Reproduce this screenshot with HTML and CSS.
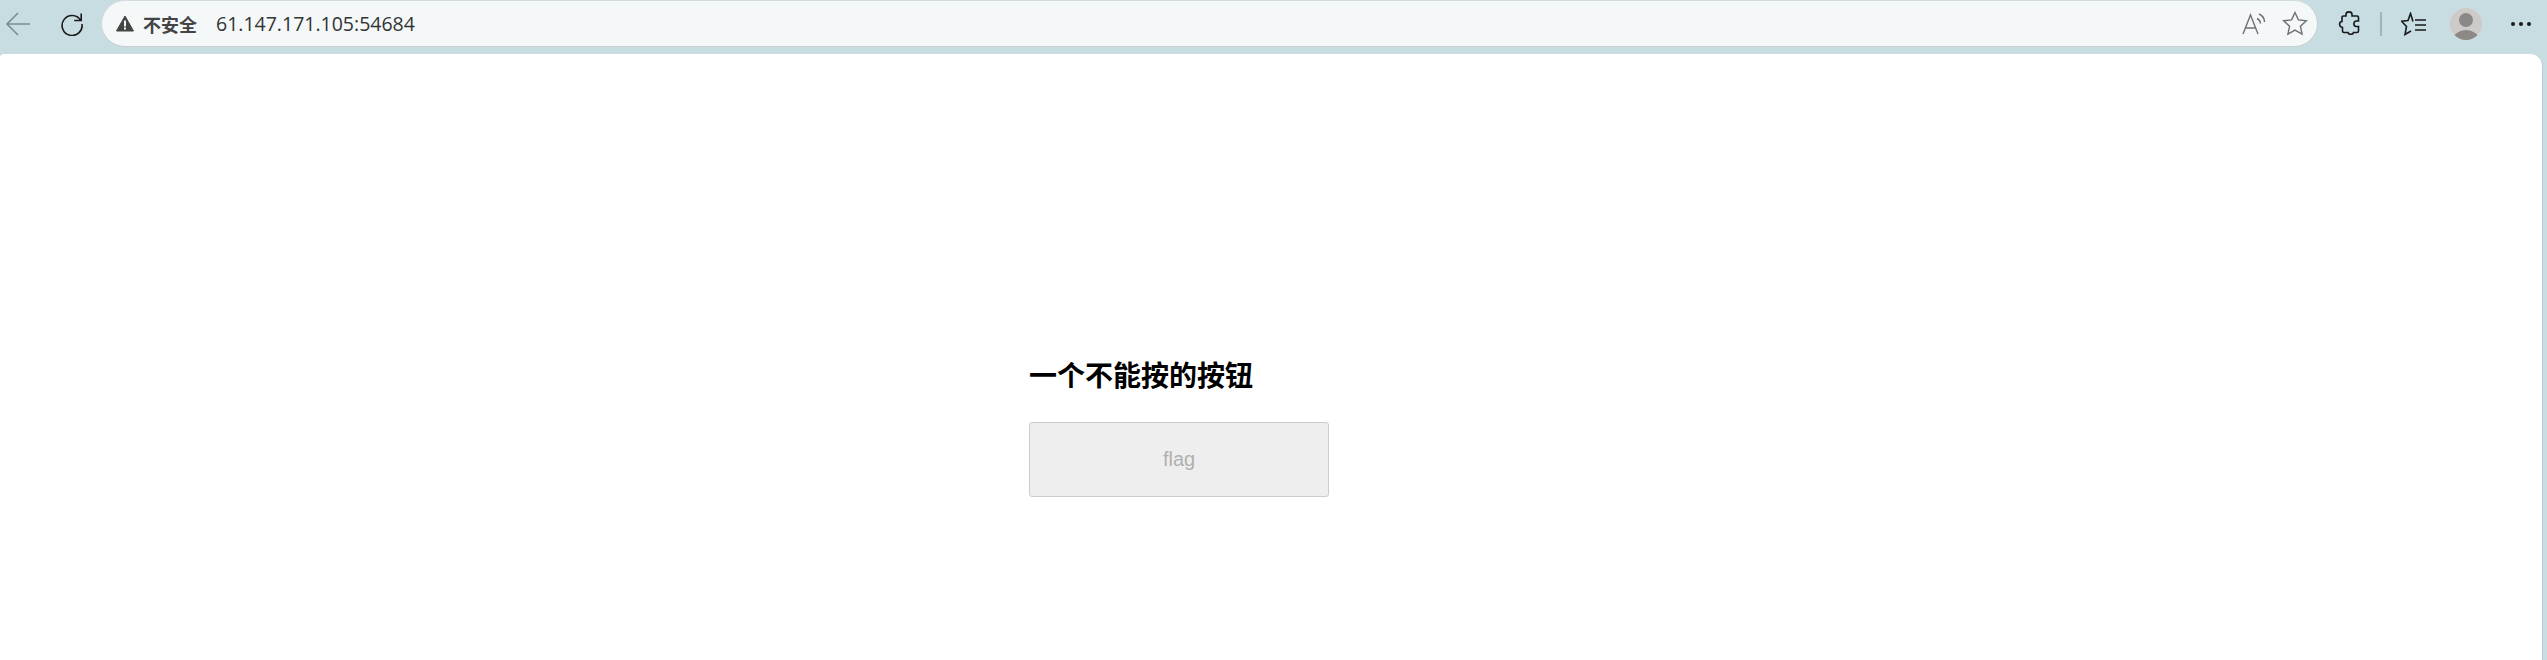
FILE: index.html
```html
<!DOCTYPE html>
<html lang="zh-CN">
<head>
    <meta charset="UTF-8">
    <title>一个不能按的按钮</title>
    <link rel="stylesheet" href="styles.css">
</head>
<body>
    <div class="toolbar">
        <svg class="icon back" width="26" height="26" viewBox="0 0 26 26"><path d="M25 13H2M13 2 2 13l11 11"/></svg>
        <svg class="icon reload" width="24" height="24" viewBox="0 0 24 24"><path d="M20.6 8.2A10 10 0 1 0 22 12M21.2 1.5v7h-7"/></svg>
        <div class="address">
            <svg class="warn" width="18" height="17" viewBox="0 0 18 17"><path d="M9 1 .5 16h17z" fill="#444" stroke="#444" stroke-linejoin="round"/><path d="M8 5.500h2v6H8zM8 12.500h2v2H8z" fill="#f4f8f9"/></svg>
            <span class="secure">不安全</span>
            <span class="url">61.147.171.105:54684</span>
            <svg class="read" width="24" height="24" viewBox="0 0 24 24"><path d="M1 22 8.500 3 16 22M3.500 16h10M15 6.500a6 6 0 0 1 3.500 5M17 2a9 9 0 0 1 5.500 8"/></svg>
            <svg class="star" width="26" height="25" viewBox="0 0 26 25"><path d="M13 1.500l3.400 7.400 8 .9-6 5.400 1.700 7.900-7.100-4-7.100 4 1.700-7.900-6-5.400 8-.9z"/></svg>
        </div>
        <svg class="icon puzzle" width="22" height="24" viewBox="0 0 22 24"><path d="M8 3.500C8 0 14 0 14 3.500V5h5a1.500 1.500 0 0 1 1.500 1.500V10h-2c-3.500 0-3.500 5.500 0 5.500h2V20a1.500 1.500 0 0 1-1.500 1.500h-3.500c-.5 2.500-5 2.500-5.500 0H6A1.500 1.500 0 0 1 4.500 20v-3.500C1 16 .5 11 4 10.500V6.500A1.500 1.500 0 0 1 5.500 5H8z"/></svg>
        <div class="divider"></div>
        <svg class="icon favs" width="26" height="24" viewBox="0 0 26 24"><path d="M12 9.500 9.500 1.500 7 8.500l-6.500.7 5 5.300-1.500 8 6-3.500M14 8h11M14 13h11M14 18h11"/></svg>
        <div class="avatar">
            <svg width="32" height="32" viewBox="0 0 32 32"><circle cx="16" cy="12" r="7" fill="#8b8885"/><path d="M3 32a13 10 0 0 1 26 0z" fill="#8b8885"/></svg>
        </div>
        <div class="more"><i></i><i></i><i></i></div>
    </div>

    <div class="page">
        <div class="panel">
            <h3>一个不能按的按钮</h3>
            <button class="flag-btn" disabled>flag</button>
        </div>
    </div>
</body>
</html>
```

FILE: styles.css
```css
html, body {
    margin: 0;
    height: 100%;
    overflow: hidden;
}
body {
    background-color: #c7dde2;
    font-family: "Liberation Sans", "Noto Sans CJK SC", sans-serif;
    display: flex;
    flex-direction: column;
}
svg {
    display: block;
    flex: none;
}
.toolbar {
    height: 54px;
    display: flex;
    align-items: flex-start;
    flex: none;
}
.icon path {
    fill: none;
    stroke: #1a1a1a;
    stroke-width: 1.6;
}
.back {
    margin: 11px 0 0 5px;
}
.back path {
    stroke: #7f8c90;
}
.reload {
    margin: 12px 0 0 29px;
}
.address {
    width: 2201px;
    height: 45px;
    margin-left: 17px;
    background-color: #f4f8f9;
    border: 1px solid #c9cfd0;
    border-top-color: #d5dcdd;
    border-left-color: #d0d5d6;
    border-radius: 24px;
    display: flex;
    align-items: center;
    padding-left: 14px;
    flex: none;
}
.warn {
    margin-right: 9px;
}
.secure {
    font-size: 18px;
    font-weight: bold;
    color: #444;
    width: 73px;
    font-family: "Noto Sans CJK SC", sans-serif;
}
.url {
    font-size: 19.5px;
    color: #333;
    font-family: "Open Sans", sans-serif;
    flex: 1;
}
.read {
    margin-right: 16px;
}
.read path, .star path {
    fill: none;
    stroke: #6e7173;
    stroke-width: 1.4;
}
.star {
    margin-right: 9px;
}
.puzzle {
    margin: 11px 0 0 20px;
}
.divider {
    width: 2px;
    height: 24px;
    margin: 12px 0 0 20px;
    background-color: #a3b2b6;
}
.favs {
    margin: 12px 0 0 19px;
}
.avatar {
    width: 32px;
    height: 32px;
    margin: 8px 0 0 23px;
    border-radius: 50%;
    background-color: #cdcac7;
    overflow: hidden;
}
.more {
    display: flex;
    gap: 4px;
    margin: 22px 0 0 29px;
}
.more i {
    width: 4px;
    height: 4px;
    border-radius: 50%;
    background-color: #1a1a1a;
}
.page {
    flex: 1;
    margin-right: 4px;
    background-color: #fff;
    border-right: 1px solid #b9ced3;
    border-radius: 4px 12px 0 0;
    padding: 306px 0 0 1029px;
}
.panel {
    width: 300px;
}
h3 {
    margin: 0 0 28px;
    font-size: 28px;
    line-height: 34px;
    font-weight: bold;
    color: #000;
    white-space: nowrap;
}
.flag-btn {
    display: block;
    width: 300px;
    height: 75px;
    padding: 0;
    background-color: #eee;
    border: 1px solid #ccc;
    border-radius: 3px;
    color: #b0b0b0;
    font-family: inherit;
    font-size: 20px;
}
```
